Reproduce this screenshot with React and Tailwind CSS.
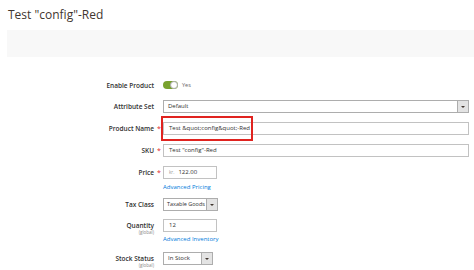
export default function App() {
    const font = { fontFamily: '"Open Sans", "Liberation Sans", sans-serif' };

    const Label = ({ text, required, scope }) => (
        <div className="flex w-[163px] shrink-0">
            <div className="w-[155px] text-right pr-[1px] pt-[2px]">
                <div className="text-[6.5px] font-semibold text-[#303030] leading-[9px] whitespace-nowrap">{text}</div>
                {scope && <div className="text-[4.5px] text-[#8a8a8a] leading-[5px] whitespace-nowrap">(global)</div>}
            </div>
            <div className="w-[8px] text-center text-[7px] text-[#e22626] leading-[13px]">{required ? "*" : ""}</div>
        </div>
    );

    const Select = ({ value, width, small }) => (
        <div className={`flex h-[13px] border border-[#adadad] bg-white ${width}`}>
            <div className={`flex-1 text-[#303030] leading-[11px] whitespace-nowrap ${small ? "pl-[3px] text-[5.5px]" : "pl-[4px] text-[6px]"}`}>{value}</div>
            <div className="w-[11px] shrink-0 bg-[#e3e3e3] border-l border-[#adadad] flex items-center justify-center">
                <div className="w-0 h-0 border-l-[2px] border-r-[2px] border-t-[2px] border-l-transparent border-r-transparent border-t-[#41362f]" />
            </div>
        </div>
    );

    const Input = ({ children, width }) => (
        <div className={`flex h-[13px] border border-[#c2c2c2] bg-white pl-[5px] items-center text-[6px] text-[#303030] whitespace-nowrap ${width}`}>
            {children}
        </div>
    );

    return (
        <div className="w-[474px] h-[270px] bg-white overflow-hidden relative" style={font}>
            <div className="pl-[8px] pt-[7px] text-[12px] leading-[16px] text-[#41362f]">Test "config"-Red</div>
            <div className="ml-[7px] mt-[7px] h-[27px] bg-[#f8f8f8]" />

            <div className="flex flex-col">
                <div className="flex mt-[22px] h-[13px] items-start">
                    <Label text="Enable Product" />
                    <div className="mt-[2px] w-[15px] h-[8px] rounded-full bg-[#79a22e] relative">
                        <div className="absolute right-0 top-0 w-[8px] h-[8px] rounded-full bg-white border border-[#adadad]" />
                    </div>
                    <span className="ml-[4px] mt-[2px] text-[5.5px] leading-[8px] text-[#666]">Yes</span>
                </div>

                <div className="flex mt-[8px]">
                    <Label text="Attribute Set" />
                    <Select value="Default" width="w-[306px]" />
                </div>

                <div className="flex mt-[9px]">
                    <Label text="Product Name" required />
                    <Input width="w-[306px]">Test &amp;quot;config&amp;quot;-Red</Input>
                </div>

                <div className="flex mt-[9px]">
                    <Label text="SKU" required />
                    <Input width="w-[306px]">Test "config"-Red</Input>
                </div>

                <div className="flex mt-[9px]">
                    <Label text="Price" required />
                    <div>
                        <Input width="w-[54px]">
                            <span className="text-[4.5px] text-[#999] mr-[4px]">kr.</span>122.00
                        </Input>
                        <div className="text-[6px] text-[#007bdb] mt-[3px] leading-[10px] whitespace-nowrap">Advanced Pricing</div>
                    </div>
                </div>

                <div className="flex mt-[6px]">
                    <Label text="Tax Class" />
                    <Select value="Taxable Goods" width="w-[55px]" small />
                </div>

                <div className="flex mt-[8px]">
                    <Label text="Quantity" scope />
                    <div>
                        <Input width="w-[54px]">12</Input>
                        <div className="text-[6px] text-[#007bdb] mt-[2px] leading-[10px] whitespace-nowrap">Advanced Inventory</div>
                    </div>
                </div>

                <div className="flex mt-[8px]">
                    <Label text="Stock Status" scope />
                    <Select value="In Stock" width="w-[50px]" />
                </div>
            </div>

            {/* highlight around product name */}
            <div className="absolute left-[161px] top-[116px] w-[92px] h-[25px] border-2 border-[#e0231f]" />
        </div>
    );
}
